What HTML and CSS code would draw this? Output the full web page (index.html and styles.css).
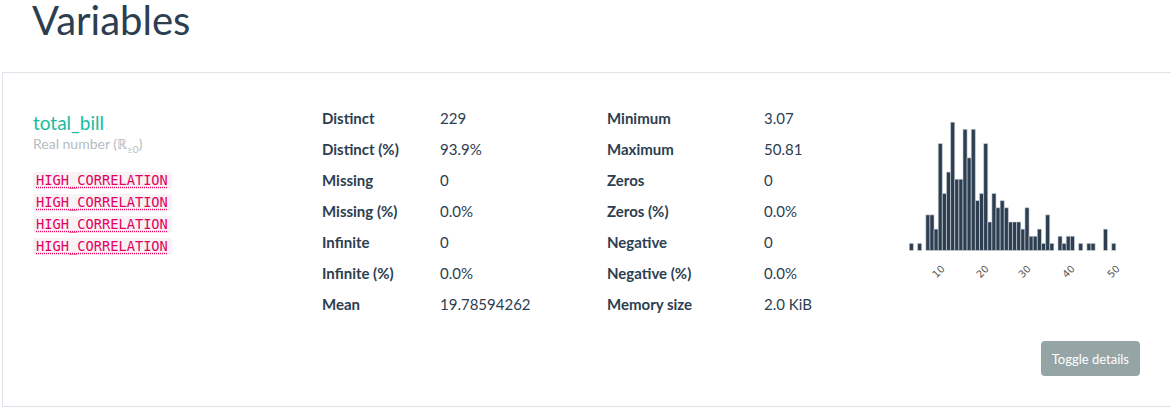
FILE: index.html
```html
<!DOCTYPE html>
<html lang="en">
<head>
<meta charset="utf-8">
<title>Variables</title>
<link rel="stylesheet" href="styles.css">
</head>
<body>
<h1 class="page-title">Variables</h1>
<section class="variable-panel">
  <div class="variable-row">
    <div class="variable-info">
      <p class="variable-name">total_bill</p>
      <p class="variable-type">Real number (ℝ<sub>≥0</sub>)</p>
      <div class="warnings">
        <code class="warning"><abbr title="This variable is highly correlated with another variable">HIGH_CORRELATION</abbr></code>
        <code class="warning"><abbr title="This variable is highly correlated with another variable">HIGH_CORRELATION</abbr></code>
        <code class="warning"><abbr title="This variable is highly correlated with another variable">HIGH_CORRELATION</abbr></code>
        <code class="warning"><abbr title="This variable is highly correlated with another variable">HIGH_CORRELATION</abbr></code>
      </div>
    </div>
    <table class="stats stats-a">
      <tr><th>Distinct</th><td>229</td></tr>
      <tr><th>Distinct (%)</th><td>93.9%</td></tr>
      <tr><th>Missing</th><td>0</td></tr>
      <tr><th>Missing (%)</th><td>0.0%</td></tr>
      <tr><th>Infinite</th><td>0</td></tr>
      <tr><th>Infinite (%)</th><td>0.0%</td></tr>
      <tr><th>Mean</th><td>19.78594262</td></tr>
    </table>
    <table class="stats stats-b">
      <tr><th>Minimum</th><td>3.07</td></tr>
      <tr><th>Maximum</th><td>50.81</td></tr>
      <tr><th>Zeros</th><td>0</td></tr>
      <tr><th>Zeros (%)</th><td>0.0%</td></tr>
      <tr><th>Negative</th><td>0</td></tr>
      <tr><th>Negative (%)</th><td>0.0%</td></tr>
      <tr><th>Memory size</th><td>2.0 KiB</td></tr>
    </table>
    <div class="histogram">
      <svg width="240" height="180" viewBox="0 0 240 180" xmlns="http://www.w3.org/2000/svg">
        <g transform="translate(9.3 139.5) scale(4.13 -7.13)" fill="#2c3e50" stroke="#d5dbe3" stroke-width="0.6">
          <rect vector-effect="non-scaling-stroke" x="0" y="0" width="1" height="1"/>
          <rect vector-effect="non-scaling-stroke" x="2" y="0" width="1" height="1"/>
          <rect vector-effect="non-scaling-stroke" x="4" y="0" width="1" height="5"/>
          <rect vector-effect="non-scaling-stroke" x="5" y="0" width="1" height="5"/>
          <rect vector-effect="non-scaling-stroke" x="6" y="0" width="1" height="3"/>
          <rect vector-effect="non-scaling-stroke" x="7" y="0" width="1" height="15"/>
          <rect vector-effect="non-scaling-stroke" x="8" y="0" width="1" height="8"/>
          <rect vector-effect="non-scaling-stroke" x="9" y="0" width="1" height="11"/>
          <rect vector-effect="non-scaling-stroke" x="10" y="0" width="1" height="18"/>
          <rect vector-effect="non-scaling-stroke" x="11" y="0" width="1" height="10"/>
          <rect vector-effect="non-scaling-stroke" x="12" y="0" width="1" height="10"/>
          <rect vector-effect="non-scaling-stroke" x="13" y="0" width="1" height="17"/>
          <rect vector-effect="non-scaling-stroke" x="14" y="0" width="1" height="13"/>
          <rect vector-effect="non-scaling-stroke" x="15" y="0" width="1" height="17"/>
          <rect vector-effect="non-scaling-stroke" x="16" y="0" width="1" height="7"/>
          <rect vector-effect="non-scaling-stroke" x="17" y="0" width="1" height="8"/>
          <rect vector-effect="non-scaling-stroke" x="18" y="0" width="1" height="15"/>
          <rect vector-effect="non-scaling-stroke" x="19" y="0" width="1" height="4"/>
          <rect vector-effect="non-scaling-stroke" x="20" y="0" width="1" height="8"/>
          <rect vector-effect="non-scaling-stroke" x="21" y="0" width="1" height="6"/>
          <rect vector-effect="non-scaling-stroke" x="22" y="0" width="1" height="7"/>
          <rect vector-effect="non-scaling-stroke" x="23" y="0" width="1" height="6"/>
          <rect vector-effect="non-scaling-stroke" x="24" y="0" width="1" height="4"/>
          <rect vector-effect="non-scaling-stroke" x="25" y="0" width="1" height="4"/>
          <rect vector-effect="non-scaling-stroke" x="26" y="0" width="1" height="4"/>
          <rect vector-effect="non-scaling-stroke" x="27" y="0" width="1" height="3"/>
          <rect vector-effect="non-scaling-stroke" x="28" y="0" width="1" height="6"/>
          <rect vector-effect="non-scaling-stroke" x="29" y="0" width="1" height="2"/>
          <rect vector-effect="non-scaling-stroke" x="30" y="0" width="1" height="2"/>
          <rect vector-effect="non-scaling-stroke" x="31" y="0" width="1" height="3"/>
          <rect vector-effect="non-scaling-stroke" x="32" y="0" width="1" height="1"/>
          <rect vector-effect="non-scaling-stroke" x="33" y="0" width="1" height="5"/>
          <rect vector-effect="non-scaling-stroke" x="34" y="0" width="1" height="1"/>
          <rect vector-effect="non-scaling-stroke" x="36" y="0" width="1" height="2"/>
          <rect vector-effect="non-scaling-stroke" x="37" y="0" width="1" height="1"/>
          <rect vector-effect="non-scaling-stroke" x="38" y="0" width="1" height="2"/>
          <rect vector-effect="non-scaling-stroke" x="39" y="0" width="1" height="2"/>
          <rect vector-effect="non-scaling-stroke" x="41" y="0" width="1" height="1"/>
          <rect vector-effect="non-scaling-stroke" x="43" y="0" width="1" height="1"/>
          <rect vector-effect="non-scaling-stroke" x="44" y="0" width="1" height="1"/>
          <rect vector-effect="non-scaling-stroke" x="47" y="0" width="1" height="3"/>
          <rect vector-effect="non-scaling-stroke" x="49" y="0" width="1" height="1"/>
        </g>
        <g class="ticks" font-family="DejaVu Sans, sans-serif" font-size="10" fill="#555" text-anchor="middle">
          <text transform="translate(41 163) rotate(-45)">10</text>
          <text transform="translate(85 163) rotate(-45)">20</text>
          <text transform="translate(127 163) rotate(-45)">30</text>
          <text transform="translate(171 163) rotate(-45)">40</text>
          <text transform="translate(216 163) rotate(-45)">50</text>
        </g>
      </svg>
    </div>
  </div>
  <div class="actions">
    <button class="toggle-btn" type="button">Toggle details</button>
  </div>
</section>
</body>
</html>
```
FILE: styles.css
```css
html, body {
  margin: 0;
  padding: 0;
  background: #ffffff;
  overflow-x: hidden;
}

body {
  font-family: Lato, "Open Sans", "Liberation Sans", sans-serif;
  color: #2c3e50;
  font-size: 15px;
}

.page-title {
  margin: 0 0 32px 0;
  padding-left: 32px;
  font-size: 40px;
  line-height: 40px;
  font-weight: 400;
  color: #2c3e50;
}

.variable-panel {
  margin-left: 2px;
  border: 1px solid #e2e2ea;
  border-right: none;
  padding: 30px 31px 30px 30px;
}

.variable-row {
  display: grid;
  grid-template-columns: 289px 285px 293px 1fr;
  align-items: start;
}

.variable-info {
  padding-top: 10px;
}

.variable-name {
  margin: 0;
  font-size: 19px;
  line-height: 20px;
  color: #18bc9c;
}

.variable-type {
  margin: 0;
  font-size: 14px;
  line-height: 22px;
  color: #b4bcc2;
}

.variable-type sub {
  font-size: 10px;
  line-height: 0;
}

.warnings {
  margin-top: 17px;
  display: flex;
  flex-direction: column;
  align-items: flex-start;
  gap: 5px;
}

.warning {
  display: inline-block;
  font-family: "DejaVu Sans Mono", "Liberation Mono", monospace;
  font-size: 13.7px;
  line-height: 17px;
  padding: 0 4px 0 3px;
  background: #f9f2f4;
  color: #e3005f;
  border-radius: 3px;
}

.warning abbr {
  text-decoration: underline dotted;
  text-underline-offset: 2px;
  cursor: help;
}

.stats {
  border-collapse: collapse;
  border-spacing: 0;
}

.stats th,
.stats td {
  padding: 5px 0;
  line-height: 21px;
  font-size: 15px;
  text-align: left;
  vertical-align: top;
  white-space: nowrap;
}

.stats th {
  font-weight: 700;
}

.stats td {
  font-weight: 400;
}

.stats-a th { width: 118px; }
.stats-a td { width: 167px; }
.stats-b th { width: 157px; }

.histogram {
  margin-top: 8px;
}

.histogram svg {
  display: block;
}

.actions {
  display: flex;
  justify-content: flex-end;
  margin-top: 21px;
}

.toggle-btn {
  font-family: Lato, "Open Sans", sans-serif;
  font-size: 13px;
  height: 35px;
  padding: 0 11px;
  border: none;
  border-radius: 4px;
  background: #95a5a6;
  color: #ffffff;
  cursor: pointer;
}
```
